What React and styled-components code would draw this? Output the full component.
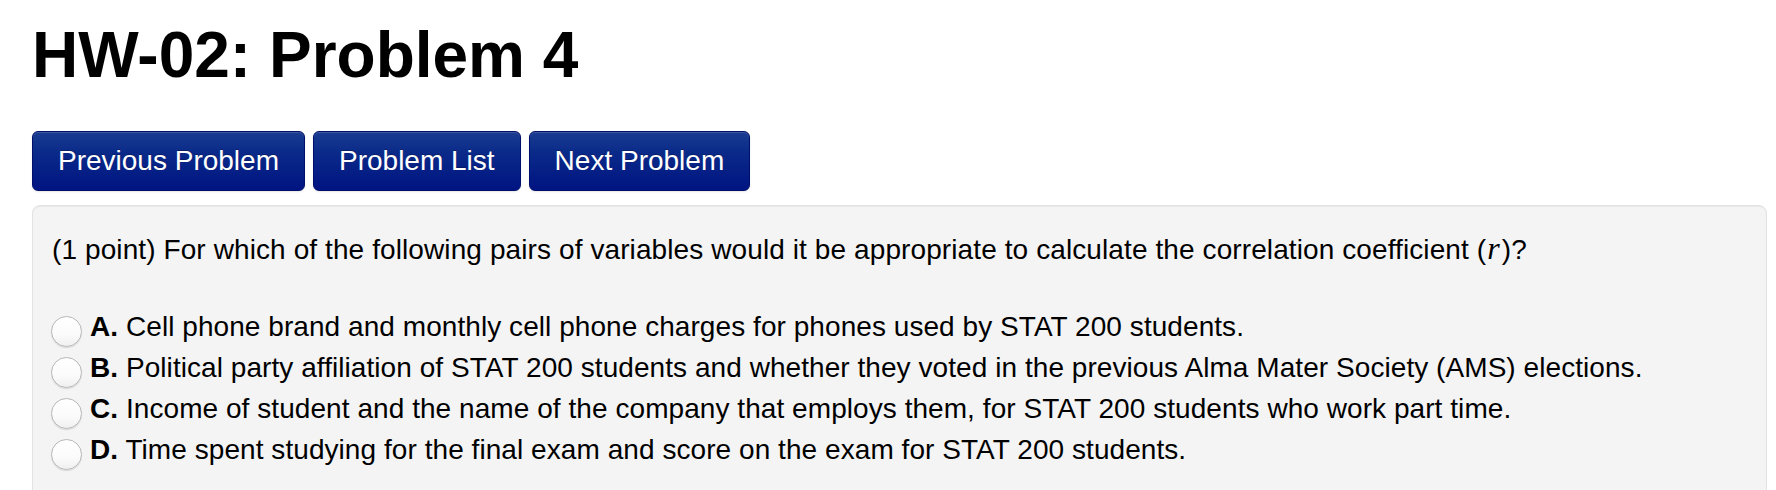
import React from "react";
import styled, { createGlobalStyle } from "styled-components";

const GlobalStyle = createGlobalStyle`
  html, body {
    margin: 0;
    padding: 0;
    background: #ffffff;
  }
  body {
    font-family: "Liberation Sans", Arial, Helvetica, sans-serif;
    font-size: 28px;
    color: #000;
  }
`;

const Page = styled.div`
  padding: 0 9px 0 32px;
`;

const Title = styled.h1`
  margin: 20px 0 41px;
  font-size: 64px;
  line-height: 70px;
  font-weight: bold;
  color: #000;
`;

const NavBar = styled.div`
  display: flex;
  gap: 8px;
  margin-bottom: 14px;
`;

const NavButton = styled.button`
  height: 60px;
  padding: 0 25px;
  border: 1px solid #00106a;
  border-radius: 6px;
  background: linear-gradient(to bottom, #1a3c90 0%, #0a2a89 35%, #001482 100%);
  color: #fff;
  font-family: "Liberation Sans", Arial, sans-serif;
  font-size: 28px;
  line-height: 58px;
  text-shadow: 0 -1px 0 rgba(0, 0, 0, 0.25);
  box-shadow: inset 0 1px 0 rgba(255, 255, 255, 0.15), 0 1px 2px rgba(0, 0, 0, 0.1);
  cursor: pointer;
`;

const Well = styled.div`
  background: #f4f4f4;
  border: 1px solid #e3e3e3;
  border-radius: 8px;
  box-shadow: inset 0 1px 1px rgba(0, 0, 0, 0.05);
  padding: 22px 19px 40px;
  line-height: 41px;
  letter-spacing: 0.06px;
`;

const Question = styled.p`
  margin: 0 0 36px;
  letter-spacing: 0.1px;
`;

const MathVar = styled.i`
  display: inline-block;
  padding: 0 2px 0 1px;
  font-family: "Liberation Serif", "Times New Roman", serif;
  font-size: 32px;
`;

const Options = styled.div`
  display: flex;
  flex-direction: column;
`;

const Option = styled.label`
  display: block;
  white-space: nowrap;
`;

const Radio = styled.span`
  display: inline-block;
  box-sizing: border-box;
  width: 31px;
  height: 31px;
  margin: 0 8px 0 -1px;
  vertical-align: -11px;
  border-radius: 50%;
  border: 1px solid #b8b8b8;
  background: linear-gradient(to bottom, #ffffff 0%, #fbfbfb 60%, #f0f0f0 100%);
  box-shadow: 0 1px 1px rgba(0, 0, 0, 0.12);
`;

const Letter = styled.b`
  font-weight: bold;
`;

const options = [
  ["A.", "Cell phone brand and monthly cell phone charges for phones used by STAT 200 students."],
  ["B.", "Political party affiliation of STAT 200 students and whether they voted in the previous Alma Mater Society (AMS) elections."],
  ["C.", "Income of student and the name of the company that employs them, for STAT 200 students who work part time."],
  ["D.", "Time spent studying for the final exam and score on the exam for STAT 200 students."],
];

export default function App() {
  return (
    <>
      <GlobalStyle />
      <Page>
        <Title>HW-02: Problem 4</Title>
        <NavBar>
          <NavButton>Previous Problem</NavButton>
          <NavButton>Problem List</NavButton>
          <NavButton>Next Problem</NavButton>
        </NavBar>
        <Well>
          <Question>
            (1 point) For which of the following pairs of variables would it be appropriate to
            calculate the correlation coefficient (<MathVar>r</MathVar>)?
          </Question>
          <Options>
            {options.map(([letter, text]) => (
              <Option key={letter}>
                <Radio />
                <Letter>{letter}</Letter> {text}
              </Option>
            ))}
          </Options>
        </Well>
      </Page>
    </>
  );
}
